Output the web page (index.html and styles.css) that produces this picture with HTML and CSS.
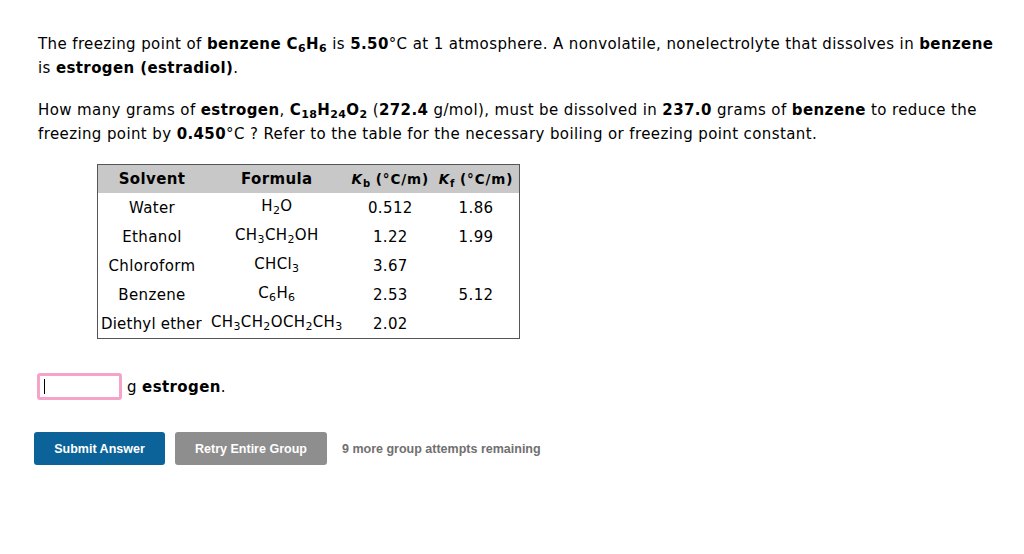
FILE: index.html
```html
<!DOCTYPE html>
<html>
<head>
<meta charset="utf-8">
<link rel="stylesheet" href="styles.css">
</head>
<body>
<div class="page">
  <p class="para">The freezing point of <b>benzene C<sub>6</sub>H<sub>6</sub></b> is <b>5.50</b>°C at 1 atmosphere. A nonvolatile, nonelectrolyte that dissolves in <b>benzene</b> is <b>estrogen (estradiol)</b>.</p>
  <p class="para">How many grams of <b>estrogen</b>, <b>C<sub>18</sub>H<sub>24</sub>O<sub>2</sub></b> (<b>272.4</b> g/mol), must be dissolved in <b>237.0</b> grams of <b>benzene</b> to reduce the freezing point by <b>0.450</b>°C ? Refer to the table for the necessary boiling or freezing point constant.</p>

  <table class="consts">
    <colgroup>
      <col class="c1"><col class="c2"><col class="c3"><col class="c4">
    </colgroup>
    <thead>
      <tr><th>Solvent</th><th>Formula</th><th class="k"><i>K</i><sub>b</sub> (°C/m)</th><th class="k"><i>K</i><sub>f</sub> (°C/m)</th></tr>
    </thead>
    <tbody>
      <tr><td>Water</td><td class="f">H<sub>2</sub>O</td><td>0.512</td><td>1.86</td></tr>
      <tr><td>Ethanol</td><td class="f">CH<sub>3</sub>CH<sub>2</sub>OH</td><td>1.22</td><td>1.99</td></tr>
      <tr><td>Chloroform</td><td class="f">CHCl<sub>3</sub></td><td>3.67</td><td></td></tr>
      <tr><td>Benzene</td><td class="f">C<sub>6</sub>H<sub>6</sub></td><td>2.53</td><td>5.12</td></tr>
      <tr><td class="left">Diethyl ether</td><td class="f">CH<sub>3</sub>CH<sub>2</sub>OCH<sub>2</sub>CH<sub>3</sub></td><td>2.02</td><td></td></tr>
    </tbody>
  </table>

  <div class="answer">
    <div class="field"><span class="caret"></span></div>
    <span class="unit">g <b>estrogen</b>.</span>
  </div>

  <div class="actions">
    <button class="btn submit">Submit Answer</button>
    <button class="btn retry">Retry Entire Group</button>
    <span class="remaining">9 more group attempts remaining</span>
  </div>
</div>
</body>
</html>
```

FILE: styles.css
```css
html, body {
  margin: 0;
  padding: 0;
  background: #ffffff;
}

.page {
  width: 960px;
  padding: 32px 0 0 38px;
  font-family: "DejaVu Sans", Verdana, sans-serif;
  font-size: 15px;
  letter-spacing: 0.39px;
  color: #000;
}

.para {
  margin: 0 0 18px 0;
  line-height: 24px;
}

sub {
  font-size: 11px;
  vertical-align: -3px;
  line-height: 0;
}

.consts {
  margin-left: 59px;
  border-collapse: collapse;
  border: 1px solid #555;
  table-layout: fixed;
  width: 423px;
  font-size: 15px;
  letter-spacing: 0.37px;
}

.c1 { width: 108px; }
.c2 { width: 141px; }
.c3 { width: 85px; }
.c4 { width: 86px; }

.consts thead tr {
  background: #c8c8c8;
}

.consts th {
  height: 28px;
  padding: 0;
  font-weight: bold;
  text-align: center;
  white-space: nowrap;
}

.consts th.k {
  font-size: 13.5px;
  letter-spacing: 0.9px;
}

.consts th.k sub {
  font-size: 10px;
  letter-spacing: 0;
}

.consts td {
  height: 29px;
  padding: 0;
  text-align: center;
  white-space: nowrap;
}

.consts td.f {
  vertical-align: top;
  padding-top: 4px;
  height: 25px;
}

.consts td.left {
  text-align: left;
  padding-left: 3px;
  letter-spacing: 0.2px;
}

.answer {
  display: flex;
  align-items: center;
  gap: 5px;
  margin-top: 34px;
  margin-left: -1px;
}

.field {
  width: 75px;
  height: 21px;
  border: 3px solid #f5a3c9;
  border-radius: 3px;
  display: flex;
  align-items: center;
  padding-left: 4px;
  box-sizing: content-box;
}

.caret {
  width: 1px;
  height: 15px;
  background: #000;
}

.actions {
  display: flex;
  align-items: center;
  margin-top: 32px;
  margin-left: -4px;
  letter-spacing: 0;
}

.btn {
  height: 33px;
  border: none;
  border-radius: 3px;
  color: #fff;
  font-family: "Liberation Sans", Arial, sans-serif;
  font-weight: bold;
  font-size: 12.5px;
  padding: 0;
  cursor: pointer;
}

.submit {
  width: 131px;
  background: #0b6399;
}

.retry {
  width: 152px;
  margin-left: 10px;
  background: #8e8e8e;
}

.remaining {
  margin-left: 15px;
  font-family: "Liberation Sans", Arial, sans-serif;
  font-weight: bold;
  font-size: 12.5px;
  color: #707070;
}
```
